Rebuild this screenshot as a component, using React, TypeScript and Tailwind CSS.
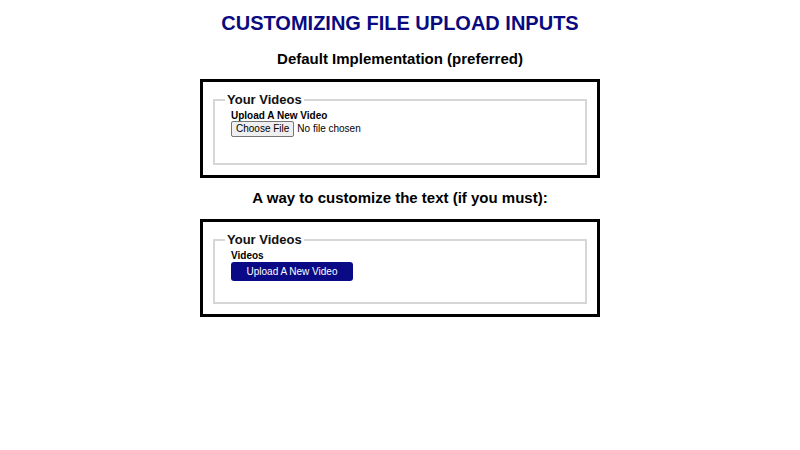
import type { ReactNode } from 'react'

function Panel({ children, bottom }: { children: ReactNode; bottom: string }) {
  return (
    <div className="box-border w-[400px] border-[3px] border-black px-[10px] pt-[10px] pb-[10px]">
      <fieldset className={`border-2 border-[#d6d6d6] px-[10px] ${bottom}`}>
        <legend className="px-[2px] text-[13px] font-bold leading-[15px] text-[#111]">Your Videos</legend>
        <div className="pt-[3px] pl-[6px]">{children}</div>
      </fieldset>
    </div>
  )
}

export default function App() {
  return (
    <div className="flex min-h-[450px] w-[800px] flex-col items-center bg-white font-['Liberation_Sans',Arial,sans-serif] text-black">
      <h1 className="mt-[12px] text-[20px] font-bold leading-[23px] text-[#0a0a80]">
        CUSTOMIZING FILE UPLOAD INPUTS
      </h1>

      <h2 className="mt-[15px] text-[15px] font-bold leading-[17px]">Default Implementation (preferred)</h2>

      <div className="mt-[12px]">
        <Panel bottom="pb-[26px]">
          <label htmlFor="video-default" className="block text-[10px] font-bold leading-[11px]">
            Upload A New Video
          </label>
          <input
            id="video-default"
            type="file"
            className="block h-[16px] text-[10px] leading-[12px] file:mr-[3px] file:rounded-[2px] file:border file:border-solid file:border-[#767676] file:bg-[#efefef] file:px-[4px] file:py-[1px] file:text-[10px] file:leading-[12px] file:text-black"
          />
        </Panel>
      </div>

      <h2 className="mt-[11px] text-[15px] font-bold leading-[18px]">A way to customize the text (if you must):</h2>

      <div className="mt-[12px]">
        <Panel bottom="pb-[21px]">
          <div className="text-[10px] font-bold leading-[11px]">Videos</div>
          <label
            htmlFor="video-custom"
            className="mt-[1px] flex h-[19px] w-[122px] cursor-pointer items-center justify-center rounded-[3px] bg-[#0a0a86] text-[10px] text-white"
          >
            Upload A New Video
          </label>
          <input id="video-custom" type="file" className="hidden" />
        </Panel>
      </div>
    </div>
  )
}
